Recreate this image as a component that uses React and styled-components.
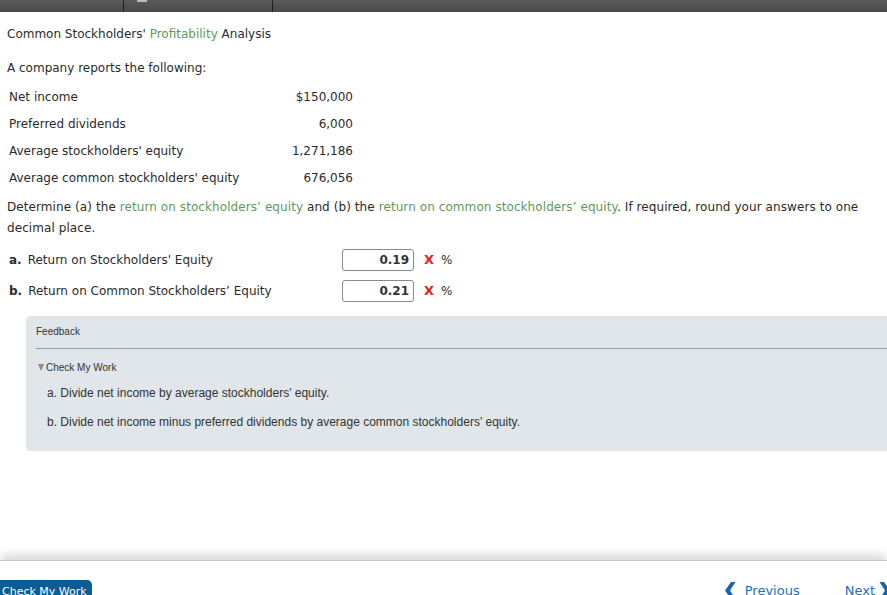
import React from "react";
import styled, { createGlobalStyle } from "styled-components";

const Global = createGlobalStyle`
  html, body { margin: 0; padding: 0; background: #fff; }
  body { width: 887px; height: 595px; overflow: hidden; font-family: "DejaVu Sans", Verdana, sans-serif; color: #2b2b2b; }
`;

const Page = styled.div`
  width: 887px;
  height: 595px;
  display: flex;
  flex-direction: column;
  overflow: hidden;
`;

const TopBar = styled.div`
  height: 12px;
  flex: none;
  display: flex;
  background: linear-gradient(#5c5c5c, #474747);
`;

const Tab = styled.div`
  width: ${(p) => p.w}px;
  flex: none;
  border-right: 1px solid #1e1e1e;
  position: relative;
`;

const TabMark = styled.span`
  position: absolute;
  left: 13px;
  top: 0;
  width: 10px;
  height: 2px;
  background: #bbb;
`;

const Content = styled.div`
  flex: 1;
  padding: 14px 0 0 7px;
  font-size: 12px;
  line-height: 16px;
`;

const Title = styled.div`
  margin-bottom: 18px;
`;

const Green = styled.span`
  color: #5f9a5c;
`;

const Intro = styled.div`
  margin-bottom: 7px;
`;

const DataTable = styled.div`
  display: grid;
  grid-template-columns: 250px 94px;
  grid-auto-rows: 27px;
  align-items: center;
  padding-left: 2px;
`;

const Label = styled.div``;
const Value = styled.div`
  text-align: right;
`;

const Para = styled.p`
  margin: 6px 0 0;
  line-height: 21px;
  padding-right: 15px;
  letter-spacing: 0.08px;
`;

const AnswerList = styled.div`
  margin-top: 10px;
  display: flex;
  flex-direction: column;
  gap: 9px;
`;

const AnswerRow = styled.div`
  display: flex;
  align-items: center;
  height: 22px;
  padding-left: 2px;
`;

const AnswerLabel = styled.div`
  width: 333px;
  b { margin-right: 6px; }
`;

const Input = styled.div`
  width: 66px;
  height: 20px;
  border: 1px solid #8a8a8a;
  border-radius: 3px;
  font-weight: bold;
  text-align: right;
  padding-right: 4px;
  line-height: 20px;
  color: #333;
`;

const Wrong = styled.span`
  color: #e41d1d;
  font-weight: bold;
  font-size: 13px;
  margin-left: 10px;
  width: 17px;
`;

const Pct = styled.span`
  font-size: 12px;
`;

const Feedback = styled.div`
  margin: 14px 0 0 19px;
  width: 880px;
  height: 135px;
  background: #e0e6e9;
  border-radius: 4px;
  padding: 10px 0 0 10px;
  box-sizing: border-box;
  font-family: "Liberation Sans", Arial, sans-serif;
  color: #333;
`;

const FbHead = styled.div`
  font-size: 10px;
  line-height: 12px;
  padding-bottom: 10px;
  border-bottom: 1px solid #9aa0a3;
`;

const Toggle = styled.div`
  margin-top: 13px;
  font-size: 10px;
  line-height: 12px;
  display: flex;
  align-items: center;
  gap: 2px;
  padding-left: 2px;
`;

const Tri = styled.span`
  display: inline-block;
  width: 0;
  height: 0;
  border-left: 3.5px solid transparent;
  border-right: 3.5px solid transparent;
  border-top: 7px solid #8c8c8c;
  margin-top: -2px;
`;

const FbItem = styled.div`
  margin: ${(p) => p.mt}px 0 0 11px;
  font-size: 12px;
  line-height: 14px;
`;

const Footer = styled.div`
  flex: none;
  height: 35px;
  border-top: 1px solid #c4c4c4;
  box-shadow: 0 -8px 8px -2px rgba(0, 0, 0, 0.14);
  display: flex;
  align-items: flex-start;
  justify-content: space-between;
  padding-top: 19px;
  box-sizing: border-box;
`;

const CheckButton = styled.button`
  border: none;
  background: #0a5c97;
  color: #fff;
  font-family: "DejaVu Sans", Verdana, sans-serif;
  font-size: 11px;
  padding: 5px 5px 5px 2px;
  border-radius: 0 5px 0 0;
  height: 24px;
  margin: 0;
  cursor: pointer;
  line-height: 14px;
`;

const Nav = styled.div`
  display: flex;
  align-items: flex-start;
  margin-right: -4px;
  padding-top: 2px;
`;

const NavLink = styled.a`
  display: flex;
  align-items: center;
  color: #1d6fba;
  font-size: 13px;
  line-height: 16px;
  text-decoration: none;
  margin-left: ${(p) => p.ml}px;
`;

const Chev = ({ dir }) => (
  <svg width="12" height="17" viewBox="0 0 12 17" style={{ flex: "none" }}>
    {dir === "left" ? (
      <path d="M7 0 L1 8.5 L7 17 L11.5 17 L6 8.5 L11.5 0 Z" fill="#1565b2" />
    ) : (
      <path d="M5 0 L11 8.5 L5 17 L0.5 17 L6 8.5 L0.5 0 Z" fill="#1565b2" />
    )}
  </svg>
);

const rows = [
  ["Net income", "$150,000"],
  ["Preferred dividends", "6,000"],
  ["Average stockholders' equity", "1,271,186"],
  ["Average common stockholders' equity", "676,056"],
];

export default function App() {
  return (
    <>
      <Global />
      <Page>
        <TopBar>
          <Tab w={123} />
          <Tab w={148}>
            <TabMark />
          </Tab>
        </TopBar>
        <Content>
          <Title>
            Common Stockholders' <Green>Profitability</Green> Analysis
          </Title>
          <Intro>A company reports the following:</Intro>
          <DataTable>
            {rows.map(([l, v]) => (
              <React.Fragment key={l}>
                <Label>{l}</Label>
                <Value>{v}</Value>
              </React.Fragment>
            ))}
          </DataTable>
          <Para>
            Determine (a) the <Green>return on stockholders’ equity</Green> and (b) the{" "}
            <Green>return on common stockholders’ equity</Green>. If required, round your answers to one
            decimal place.
          </Para>
          <AnswerList>
            <AnswerRow>
              <AnswerLabel>
                <b>a.</b>Return on Stockholders' Equity
              </AnswerLabel>
              <Input>0.19</Input>
              <Wrong>X</Wrong>
              <Pct>%</Pct>
            </AnswerRow>
            <AnswerRow>
              <AnswerLabel>
                <b>b.</b>Return on Common Stockholders’ Equity
              </AnswerLabel>
              <Input>0.21</Input>
              <Wrong>X</Wrong>
              <Pct>%</Pct>
            </AnswerRow>
          </AnswerList>
          <Feedback>
            <FbHead>Feedback</FbHead>
            <Toggle>
              <Tri />
              Check My Work
            </Toggle>
            <FbItem mt={12}>a. Divide net income by average stockholders' equity.</FbItem>
            <FbItem mt={15}>b. Divide net income minus preferred dividends by average common stockholders' equity.</FbItem>
          </Feedback>
        </Content>
        <Footer>
          <CheckButton>Check My Work</CheckButton>
          <Nav>
            <NavLink href="#" ml={0}>
              <Chev dir="left" />
              <span style={{ marginLeft: 9 }}>Previous</span>
            </NavLink>
            <NavLink href="#" ml={45}>
              <span style={{ marginRight: 4 }}>Next</span>
              <Chev dir="right" />
            </NavLink>
          </Nav>
        </Footer>
      </Page>
    </>
  );
}
